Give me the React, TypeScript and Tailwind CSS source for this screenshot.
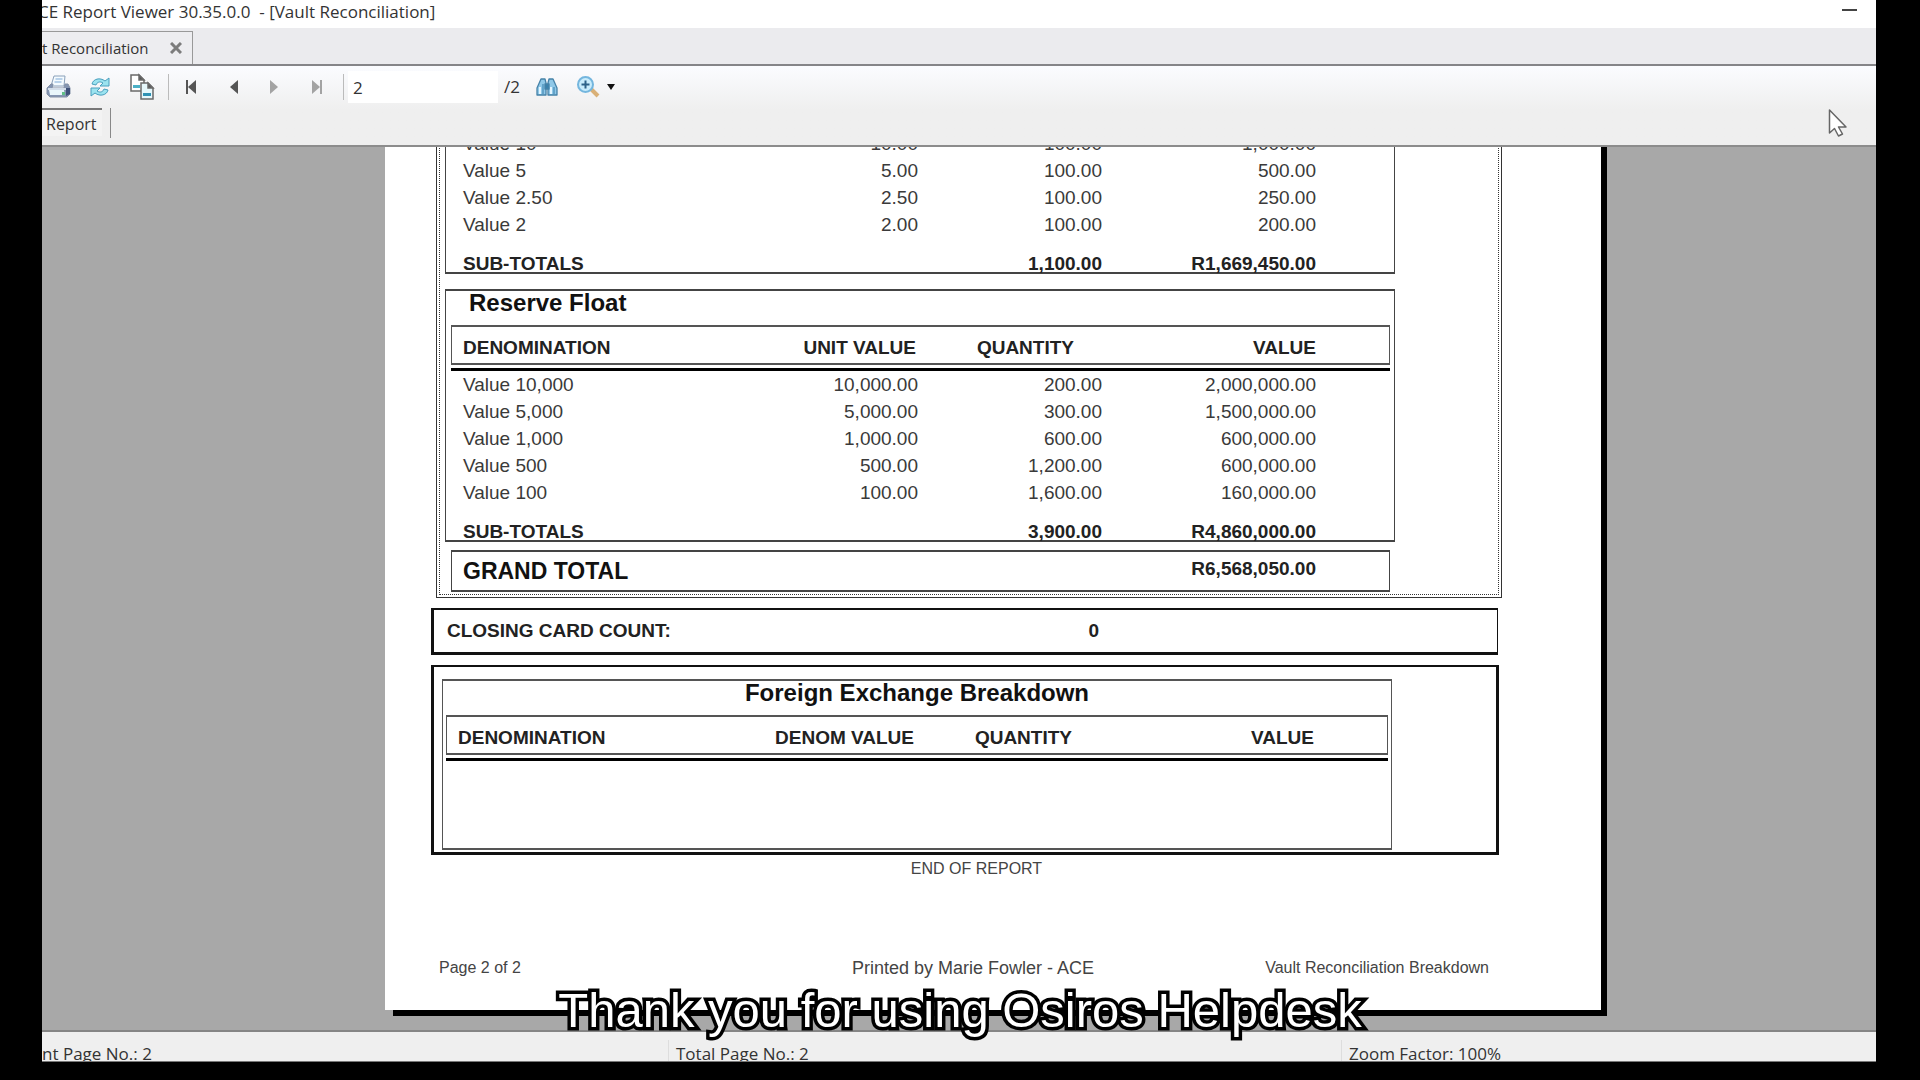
import React from "react";

type Row = [string, string, string, string];

const coinRows: Row[] = [
  ["Value 10", "10.00", "100.00", "1,000.00"],
  ["Value 5", "5.00", "100.00", "500.00"],
  ["Value 2.50", "2.50", "100.00", "250.00"],
  ["Value 2", "2.00", "100.00", "200.00"],
];

const reserveRows: Row[] = [
  ["Value 10,000", "10,000.00", "200.00", "2,000,000.00"],
  ["Value 5,000", "5,000.00", "300.00", "1,500,000.00"],
  ["Value 1,000", "1,000.00", "600.00", "600,000.00"],
  ["Value 500", "500.00", "1,200.00", "600,000.00"],
  ["Value 100", "100.00", "1,600.00", "160,000.00"],
];

function Columns() {
  return (
    <colgroup>
      <col />
      <col className="w-[180px]" />
      <col className="w-[184px]" />
      <col className="w-[214px]" />
      <col className="w-[74px]" />
    </colgroup>
  );
}

function TableHead({ unit }: { unit: string }) {
  return (
    <thead>
      <tr>
        <th scope="col" className="h-10 border-y-2 border-l border-[#555] p-0 pt-[6px] pl-[11px] text-left font-bold text-[#222]">
          DENOMINATION
        </th>
        <th scope="col" className="h-10 border-y-2 border-[#555] p-0 pt-[6px] pr-[2px] text-right font-bold text-[#222]">
          {unit}
        </th>
        <th scope="col" className="h-10 border-y-2 border-[#555] p-0 pt-[6px] pr-7 text-right font-bold text-[#222]">
          QUANTITY
        </th>
        <th scope="col" className="h-10 border-y-2 border-[#555] p-0 pt-[6px] text-right font-bold text-[#222]">
          VALUE
        </th>
        <td className="border-y-2 border-r border-[#555] p-0" />
      </tr>
      <tr>
        <td colSpan={5} className="h-[6px] border-b-[3px] border-black p-0" />
      </tr>
    </thead>
  );
}

function TableRows({ rows, quantity, total }: { rows: Row[]; quantity: string; total: string }) {
  return (
    <tbody>
      {rows.map((r) => (
        <tr key={r[0]} className="h-[27px] text-right text-[#3a3a3a]">
          <td className="p-0 pl-3 text-left">{r[0]}</td>
          <td className="p-0">{r[1]}</td>
          <td className="p-0">{r[2]}</td>
          <td className="p-0">{r[3]}</td>
          <td className="p-0" />
        </tr>
      ))}
      <tr className="h-[34px] text-right align-bottom leading-[17px] font-bold text-[#222]">
        <td className="p-0 pl-3 text-left">SUB-TOTALS</td>
        <td className="p-0" />
        <td className="p-0">{quantity}</td>
        <td className="p-0">{total}</td>
        <td className="p-0" />
      </tr>
    </tbody>
  );
}

const tableClass = "w-full table-fixed border-separate border-spacing-0 text-[19px] leading-6";

function PrinterIcon() {
  return (
    <svg viewBox="0 0 26 24" className="h-6 w-[26px]">
      <path d="M8 1h11l-1 10H5z" fill="#f4fbff" stroke="#8aa0ba" />
      <path d="M9.500 4h7M8.500 7h7" stroke="#b9d2ea" strokeWidth="2" />
      <path d="M1 13l4-4h2l-1 4h12l1-4h3l2 4v6l-3 3H4l-3-3z" fill="#8495b2" stroke="#8290a6" />
      <path d="M2 13h18v2H2z" fill="#d3deea" />
      <path d="M3 15h15l1 5H4z" fill="#e9f6fb" />
      <path d="M20 13h4v6l-4 2z" fill="#3e5078" />
      <path d="M16 17h3v3h-3z" fill="#5fbf86" />
    </svg>
  );
}

function RefreshIcon() {
  return (
    <svg viewBox="0 0 22 20" className="h-5 w-[22px]" fill="#9be3ef" stroke="#4a9fbe" strokeWidth="1" strokeLinejoin="round">
      <path d="M3 7C4 2 11 0 16 4l4-3v8h-9l3-3C11 4 8 5 7 8z" />
      <path d="M19 13c-1 5-8 7-13 3l-4 3v-8h9l-3 3c3 2 6 1 7-2z" />
    </svg>
  );
}

function CopyIcon() {
  return (
    <svg viewBox="0 0 26 28" className="h-7 w-[26px]" stroke="#6a6a6a" strokeWidth="1.500">
      <path d="M2 2h8l5 5v11H2z" fill="#fff" />
      <path d="M10 2v5h5z" fill="#555" />
      <path d="M4 12h7v3H4z" fill="#4bb0c6" stroke="none" />
      <path d="M12 10h7l5 5v11H12z" fill="#e6f7fb" />
      <path d="M19 10v5h5z" fill="#555" />
      <path d="M14 20h8v3h-8z" fill="#2f92b4" stroke="none" />
    </svg>
  );
}

function BinocularsIcon() {
  return (
    <svg viewBox="0 0 22 20" className="h-5 w-[22px]" stroke="#4682a8" strokeWidth="1.300" strokeLinejoin="round">
      <path d="M5 2h4l1 4v12H1v-7z" fill="#8fc8e8" />
      <path d="M13 2h4l4 9v7h-9V6z" fill="#8fc8e8" />
      <path d="M9 7h4v5H9z" fill="#3b81ac" />
      <path d="M4 10v7M15 10v7" stroke="#e3f5ff" strokeWidth="2" />
      <path d="M7 7v10M18 10v7" stroke="#4c8fb9" />
    </svg>
  );
}

function ZoomIcon() {
  return (
    <svg viewBox="0 0 24 24" className="size-6">
      <path d="M15 14l7 7" stroke="#d9b077" strokeWidth="4" />
      <circle cx="9.5" cy="9.5" r="7.5" fill="#c9ecfb" stroke="#74b6de" strokeWidth="2" />
      <path d="M9.500 5.500v8M5.500 9.500h8" stroke="#2e6288" strokeWidth="2" />
    </svg>
  );
}

function NavIcon({ flip, bar, color }: { flip?: boolean; bar?: boolean; color: string }) {
  return (
    <svg viewBox="0 0 12 14" className="h-[14px] w-3">
      <g fill={color} transform={flip ? "translate(12 0) scale(-1 1)" : undefined}>
        {bar && <path d="M1 0h2v14H1z" />}
        <path d="M11 0v14L3 7z" />
      </g>
    </svg>
  );
}

function ToolButton({ label, children }: { label: string; children: React.ReactNode }) {
  return (
    <button type="button" aria-label={label} className="flex w-7 items-center justify-center">
      {children}
    </button>
  );
}

export default function App() {
  return (
    <div className="relative h-screen overflow-hidden bg-black pr-11 pb-[18px] pl-[42px] font-['Liberation_Sans',Arial,sans-serif]">
      <div className="flex h-full flex-col overflow-hidden bg-[#efefef] font-['Open_Sans','Noto_Sans',sans-serif] text-[#333]">
        <header className="flex h-7 shrink-0 items-start justify-between bg-white pr-[19px]">
          <h1 className="-ml-1 text-[17px] leading-[23px] whitespace-pre">CE Report Viewer 30.35.0.0  - [Vault Reconciliation]</h1>
          <button type="button" aria-label="Minimize" className="flex h-[19px] w-[15px] items-center">
            <span className="h-[2px] w-full bg-[#444]" />
          </button>
        </header>

        <div className="flex h-[38px] shrink-0 items-end border-b-2 border-[#858588] bg-[#ebebee]">
          <div className="flex h-[33px] w-[151px] items-center justify-between border-t border-r border-[#999] bg-[#ededf0] pr-[10px] text-[15px]">
            <span>t Reconciliation</span>
            <button type="button" aria-label="Close tab">
              <svg viewBox="0 0 12 12" className="size-3" stroke="#7c7c7c" strokeWidth="3">
                <path d="M1 1l10 10M11 1L1 11" />
              </svg>
            </button>
          </div>
        </div>

        <div className="flex h-[81px] shrink-0 flex-col border-b-2 border-[#8c8c8c] bg-linear-to-b from-[#fbfcff] to-[#efefef] to-55%">
          <div className="flex h-[42px] shrink-0 items-center pl-[3px]">
            <ToolButton label="Print"><PrinterIcon /></ToolButton>
            <div className="ml-[13px] flex"><ToolButton label="Refresh"><RefreshIcon /></ToolButton></div>
            <div className="ml-[14px] flex"><ToolButton label="Copy"><CopyIcon /></ToolButton></div>
            <span className="ml-3 h-[26px] w-px bg-[#bbb]" />
            <div className="ml-2 flex gap-[14px]">
              <ToolButton label="First page"><NavIcon bar color="#555" /></ToolButton>
              <ToolButton label="Previous page"><NavIcon color="#555" /></ToolButton>
              <ToolButton label="Next page"><NavIcon flip color="#a3a3a3" /></ToolButton>
              <ToolButton label="Last page"><NavIcon flip bar color="#a3a3a3" /></ToolButton>
            </div>
            <span className="ml-3 h-[26px] w-px bg-[#bbb]" />
            <input aria-label="Page number" defaultValue="2" className="ml-1 h-8 w-[150px] bg-white px-[5px] text-[17px] outline-none" />
            <span className="ml-[6px] text-[17px]">/2</span>
            <div className="ml-[13px] flex"><ToolButton label="Find"><BinocularsIcon /></ToolButton></div>
            <div className="ml-[13px] flex"><ToolButton label="Zoom"><ZoomIcon /></ToolButton></div>
            <button type="button" aria-label="Zoom options" className="ml-[5px]">
              <svg viewBox="0 0 8 6" className="h-[6px] w-2"><path d="M0 0h8L4 6z" fill="#111" /></svg>
            </button>
          </div>
          <div className="flex items-start">
            <button type="button" className="h-7 w-[60px] border-t-2 border-[#777] bg-[#f3f3f3] pl-1 text-left text-base leading-[28px]">
              Report
            </button>
            <span className="ml-2 h-[30px] w-px bg-[#888]" />
          </div>
        </div>

        <main className="min-h-0 flex-1 overflow-hidden bg-[#a8a8a8] pl-[343px] font-['Liberation_Sans',Arial,sans-serif]">
          <article className="-mt-[17px] w-full max-w-[1216px] bg-white pr-[99px] pb-[31px] pl-[46px] shadow-[7px_7px_0_-1px_#000]">
            <div className="ml-[5px] border border-t-0 border-[#333] p-[2px] pt-0">
              <div className="border border-t-0 border-dotted border-[#333] pr-[103px] pb-[2px] pl-[5px]">
                <section className="border border-t-0 border-b-2 border-[#444] pr-1 pl-[5px]">
                  <table className={tableClass}>
                    <Columns />
                    <TableRows rows={coinRows} quantity="1,100.00" total="R1,669,450.00" />
                  </table>
                </section>

                <section className="mt-[15px] border border-y-2 border-[#444] pr-1 pl-[5px]">
                  <h2 className="h-[34px] pl-[18px] text-2xl leading-6 font-bold text-[#111]">Reserve Float</h2>
                  <table className={tableClass}>
                    <Columns />
                    <TableHead unit="UNIT VALUE" />
                    <TableRows rows={reserveRows} quantity="3,900.00" total="R4,860,000.00" />
                  </table>
                </section>

                <div className="mt-2 mr-[5px] ml-[6px] flex h-[42px] items-center justify-between border border-y-2 border-[#444] pr-[73px] pl-[11px] font-bold">
                  <span className="text-[23px] text-[#111]">GRAND TOTAL</span>
                  <span className="pb-1 text-[19px] text-[#222]">R6,568,050.00</span>
                </div>
              </div>
            </div>

            <div className="mt-[10px] mr-[4px] flex h-[47px] items-center justify-between border-t-2 border-r border-b-[3px] border-l-[3px] border-[#111] pr-[398px] pl-[13px] text-[19px] font-bold text-[#222]">
              <span>CLOSING CARD COUNT:</span>
              <span>0</span>
            </div>

            <section className="mt-[10px] mr-[3px] border-x-[3px] border-t-2 border-b-[3px] border-[#111] pt-3 pr-[104px] pb-[2px] pl-2">
              <div className="border border-y-2 border-[#555] px-[3px] pb-[87px]">
                <h2 className="h-[34px] text-center text-2xl leading-6 font-bold text-[#111]">Foreign Exchange Breakdown</h2>
                <table className={tableClass}>
                  <Columns />
                  <TableHead unit="DENOM VALUE" />
                </table>
              </div>
            </section>

            <p className="mt-1 pl-5 text-center text-base leading-5 text-[#444]">END OF REPORT</p>

            <footer className="mt-[78px] mr-[13px] ml-2 grid grid-cols-[1fr_auto_1fr] items-center text-base leading-[22px] text-[#444]">
              <span>Page 2 of 2</span>
              <span className="pl-[18px] text-lg leading-[22px]">Printed by Marie Fowler - ACE</span>
              <span className="text-right">Vault Reconciliation Breakdown</span>
            </footer>
          </article>
        </main>

        <footer className="flex h-8 shrink-0 items-start overflow-hidden border-t-2 border-b border-t-[#858585] border-b-[#777] bg-[#efefef] text-[17px] leading-7">
          <div className="mt-2 w-[626px]">nt Page No.: 2</div>
          <div className="mt-2 w-[673px] border-l border-[#ddd] pl-[7px]">Total Page No.: 2</div>
          <div className="mt-2 flex-1 border-l border-[#ddd] pl-[7px]">Zoom Factor: 100%</div>
        </footer>
      </div>

      <p className="absolute inset-x-0 bottom-10 text-center text-[49px] leading-[60px] text-white [-webkit-text-stroke:7px_black] [paint-order:stroke_fill] [stroke-linejoin:round]">
        Thank you for using Osiros Helpdesk
      </p>

      <svg viewBox="0 0 20 30" className="absolute top-[108px] right-[72px] h-[30px] w-5">
        <path d="M1.500 2v23l5-4.500 4 7.500 4-2-4-7h7.500z" fill="#fff" stroke="#666" strokeWidth="1.500" strokeLinejoin="round" />
      </svg>
    </div>
  );
}
